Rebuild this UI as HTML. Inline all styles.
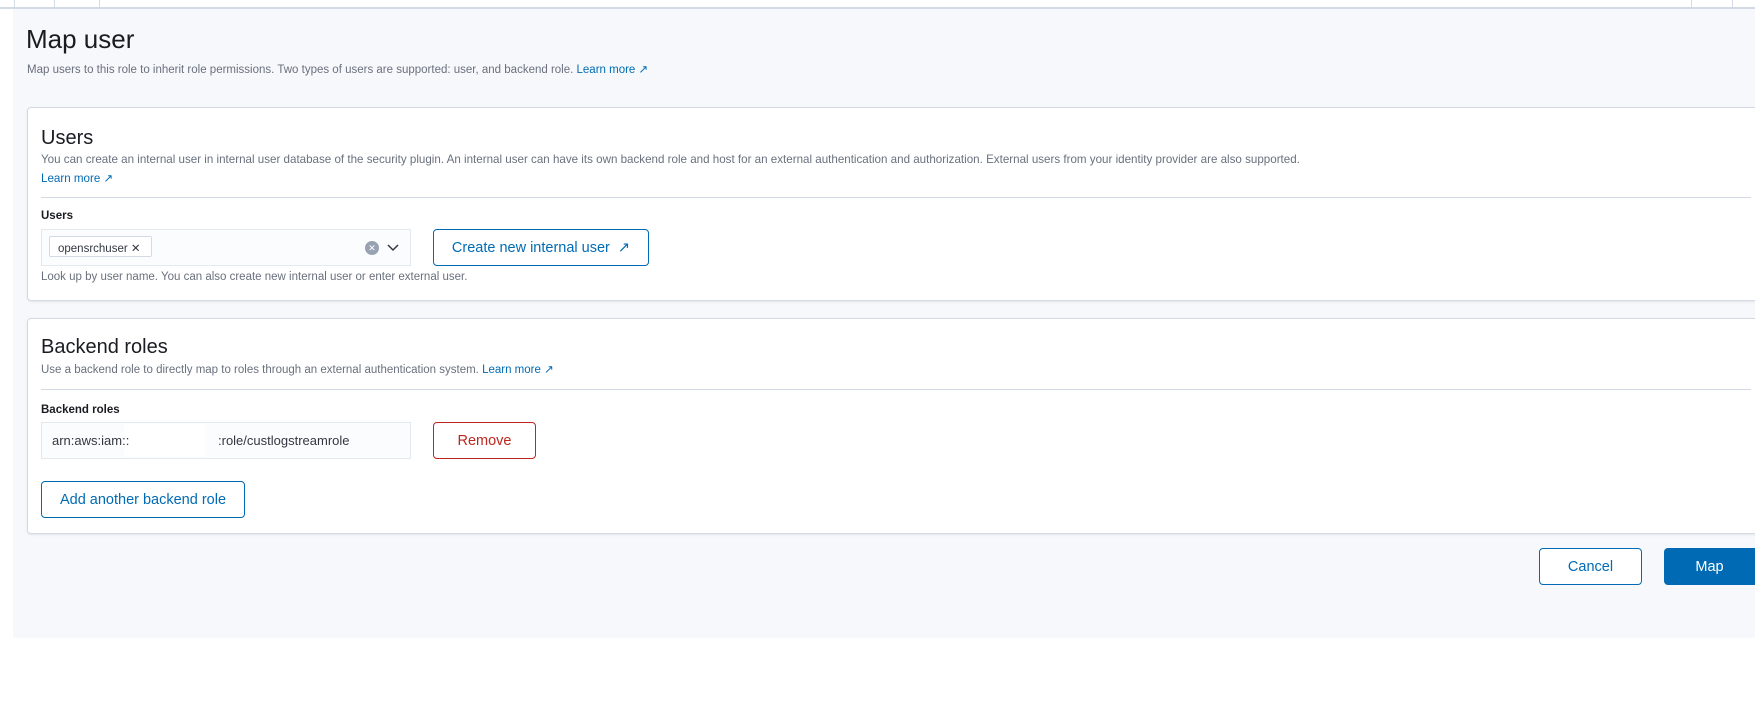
<!DOCTYPE html>
<html><head><meta charset="utf-8"><style>
*{box-sizing:border-box;margin:0;padding:0}
body{width:1755px;height:717px;background:#fff;font-family:"Liberation Sans",sans-serif;position:relative;overflow:hidden;color:#343741}
.a{position:absolute}
.top{left:0;top:0;width:1755px;height:9px;border-bottom:2px solid #d3dae6;background:#fff}
.vl{top:0;height:9px;width:1px;background:#d3dae6}
.gray{left:13px;top:9px;width:1742px;height:629px;background:#f7f8fc}
.card{left:27px;width:1740px;background:#fff;border:1px solid #d3dae6;border-radius:4px;box-shadow:0 1px 2px rgba(0,0,0,.08)}
.h{font-size:20px;color:#1a1c21;white-space:nowrap}
.d{font-size:11.6px;color:#69707d;white-space:nowrap}
.lk{color:#006bb4}
.hr{height:1px;background:#d3dae6}
.lb{font-size:11.5px;font-weight:bold;color:#1a1c21}
.inp{background:#fbfcfd;border:1px solid #e4e8ef;}
.btn{border:1px solid #006bb4;border-radius:4px;color:#006bb4;font-size:14.5px;display:flex;align-items:center;justify-content:center;background:#fff}
</style></head><body>
<div class="a top"></div>
<div class="a vl" style="left:14px"></div><div class="a vl" style="left:54px"></div><div class="a vl" style="left:99px"></div><div class="a vl" style="left:1691px"></div><div class="a vl" style="left:1732px"></div>
<div class="a gray"></div>
<div class="a h" style="left:26px;top:24px;font-size:26px;font-weight:300">Map user</div>
<div class="a d" style="left:27px;top:62px;font-size:11.5px">Map users to this role to inherit role permissions. Two types of users are supported: user, and backend role. <span class="lk">Learn more ↗</span></div>

<div class="a card" style="top:107px;height:194px"></div>
<div class="a h" style="left:41px;top:127px">Users</div>
<div class="a d" style="left:41px;top:153px">You can create an internal user in internal user database of the security plugin. An internal user can have its own backend role and host for an external authentication and authorization. External users from your identity provider are also supported.</div>
<div class="a d lk" style="left:41px;top:171px">Learn more ↗</div>
<div class="a hr" style="left:41px;top:197px;width:1710px"></div>
<div class="a lb" style="left:41px;top:210px">Users</div>
<div class="a inp" style="left:41px;top:229px;width:370px;height:37px"></div>
<div class="a" style="left:49px;top:236px;width:103px;height:21px;border:1px solid #d3dae6;border-radius:2px;background:#fff;font-size:11.5px;color:#343741;padding:4px 0 0 8px;white-space:nowrap">opensrchuser ✕</div>
<div class="a" style="left:365px;top:241px;width:14px;height:14px;border-radius:50%;background:#98a2b3;color:#fff;font-size:9px;text-align:center;line-height:14px">✕</div>
<svg class="a" style="left:386px;top:243px" width="14" height="10"><path d="M2 2l5 5 5-5" fill="none" stroke="#343741" stroke-width="1.5"/></svg>
<div class="a btn" style="left:433px;top:229px;width:216px;height:37px">Create new internal user&nbsp;&nbsp;↗</div>
<div class="a d" style="left:41px;top:271px;font-size:11.5px">Look up by user name. You can also create new internal user or enter external user.</div>

<div class="a card" style="top:318px;height:216px"></div>
<div class="a h" style="left:41px;top:336px">Backend roles</div>
<div class="a d" style="left:41px;top:362px;font-size:11.5px">Use a backend role to directly map to roles through an external authentication system. <span class="lk">Learn more ↗</span></div>
<div class="a hr" style="left:41px;top:389px;width:1710px"></div>
<div class="a lb" style="left:41px;top:404px">Backend roles</div>
<div class="a inp" style="left:41px;top:422px;width:370px;height:37px"></div>
<div class="a" style="left:124px;top:424px;width:82px;height:33px;background:#fff"></div>
<div class="a" style="left:52px;top:433px;font-size:13px;color:#343741">arn:aws:iam::</div>
<div class="a" style="left:218px;top:433px;font-size:13px;color:#343741">:role/custlogstreamrole</div>
<div class="a btn" style="left:433px;top:422px;width:103px;height:37px;border-color:#bd271e;color:#bd271e">Remove</div>
<div class="a btn" style="left:41px;top:481px;width:204px;height:37px">Add another backend role</div>

<div class="a btn" style="left:1539px;top:548px;width:103px;height:37px">Cancel</div>
<div class="a btn" style="left:1664px;top:548px;width:100px;height:37px;background:#006bb4;color:#fff;padding-right:9px">Map</div>
</body></html>
